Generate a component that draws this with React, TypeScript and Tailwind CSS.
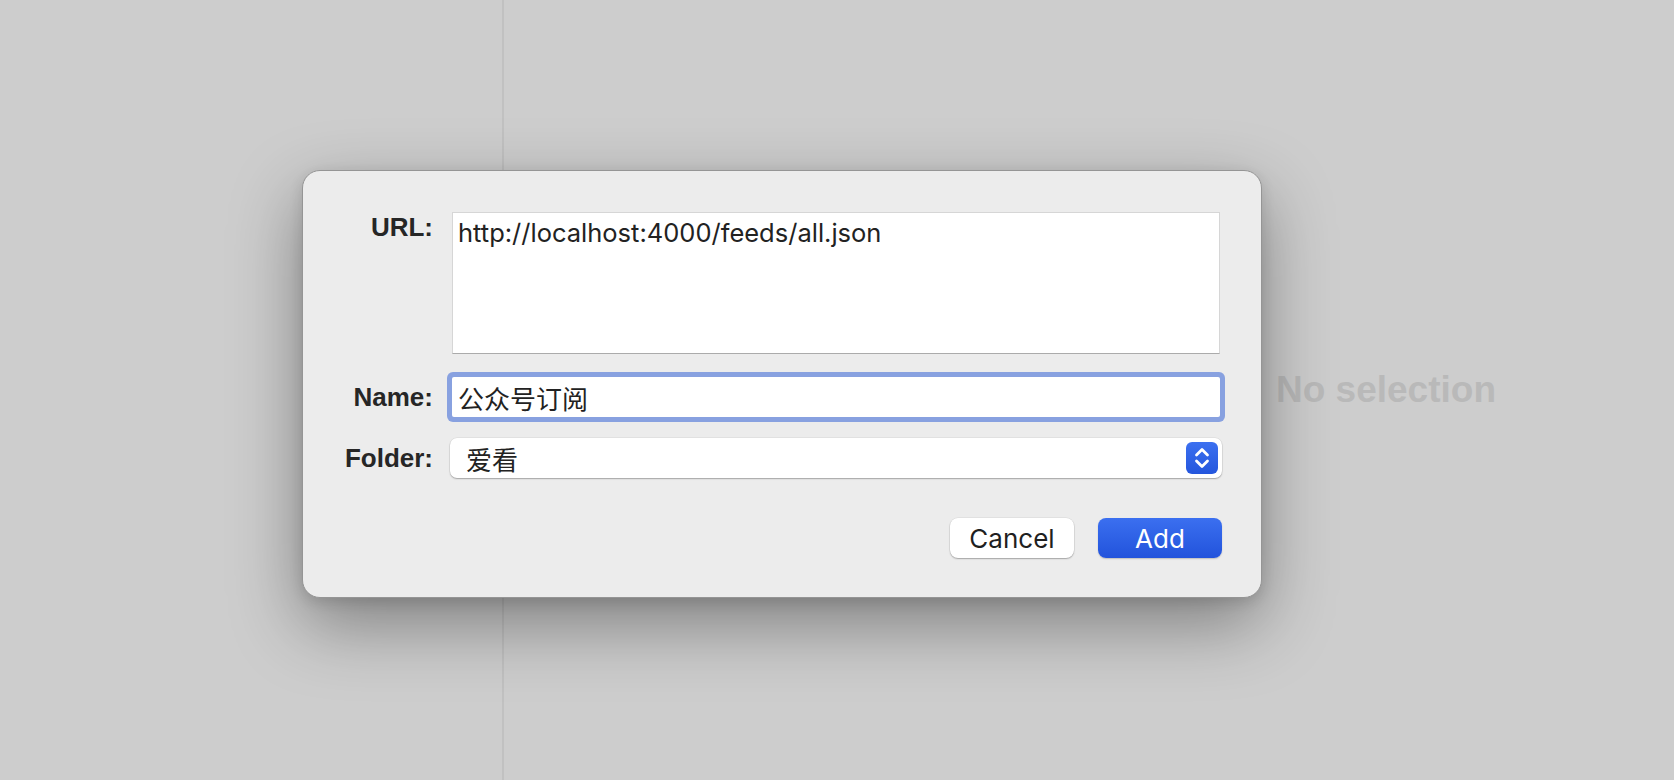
import React from "react";

const StepperIcon: React.FC = () => (
  <svg width="20" height="24" viewBox="0 0 20 24" fill="none" stroke="white" strokeWidth="2.8" strokeLinecap="round" strokeLinejoin="round">
    <path d="M4.5 9 L10 3.5 L15.5 9" />
    <path d="M4.5 15 L10 20.5 L15.5 15" />
  </svg>
);

const FieldLabel: React.FC<{ text: string }> = ({ text }) => (
  <div className="w-[130px] shrink-0 text-right text-[26px] leading-[30px] font-bold text-[#262626] font-['Liberation_Sans',sans-serif]">
    {text}
  </div>
);

const AddFeedSheet: React.FC = () => {
  return (
    <div className="absolute left-[302px] top-[170px] w-[960px] rounded-[18px] border border-[#959595] bg-[#ececec] shadow-[0_26px_70px_rgba(0,0,0,0.38),0_4px_14px_rgba(0,0,0,0.12)] pt-[41px] pb-[39px] pr-[39px]">
      {/* URL */}
      <div className="flex items-start">
        <FieldLabel text="URL:" />
        <div className="ml-[19px] h-[142px] w-[768px] border border-[#d6d6d6] border-b-[#ababab] bg-white px-[5px] pt-[4px] text-[25.5px] leading-[32px] text-[#222] font-['Inter',sans-serif]">
          http://localhost:4000/feeds/all.json
        </div>
      </div>

      {/* Name */}
      <div className="mt-[23px] flex items-center">
        <FieldLabel text="Name:" />
        <div className="ml-[19px] flex h-[40px] w-[768px] items-center rounded-[2px] bg-white pl-[6px] ring-[5px] ring-[#88a1e0] text-[26px] text-[#222] font-['Noto_Sans_CJK_SC',sans-serif]">
          公众号订阅
        </div>
      </div>

      {/* Folder */}
      <div className="mt-[21px] flex items-center">
        <FieldLabel text="Folder:" />
        <div className="ml-[17px] flex h-[40px] w-[772px] items-center justify-between rounded-[7px] bg-white pl-[16px] pr-[4px] shadow-[0_1px_1.5px_rgba(0,0,0,0.28),0_0_0_0.5px_rgba(0,0,0,0.08)]">
          <span className="text-[26px] text-[#222] font-['Noto_Sans_CJK_SC',sans-serif]">爱看</span>
          <div className="flex h-[32px] w-[32px] items-center justify-center rounded-[6px] bg-gradient-to-b from-[#3c70f0] to-[#2456dd]">
            <StepperIcon />
          </div>
        </div>
      </div>

      {/* Buttons */}
      <div className="mt-[40px] flex justify-end gap-[24px]">
        <button className="h-[40px] w-[124px] rounded-[8px] bg-white text-[26px] text-[#1f1f1f] shadow-[0_1px_1.5px_rgba(0,0,0,0.28),0_0_0_0.5px_rgba(0,0,0,0.08)] font-['Inter',sans-serif]">
          Cancel
        </button>
        <button className="h-[40px] w-[124px] rounded-[8px] bg-gradient-to-b from-[#3b6ff0] to-[#2253dc] text-[26px] text-white shadow-[0_1px_1.5px_rgba(0,0,0,0.2)] font-['Inter',sans-serif]">
          Add
        </button>
      </div>
    </div>
  );
};

export default function App() {
  return (
    <div className="relative flex h-[780px] w-[1674px] overflow-hidden bg-[#cdcdcd]">
      {/* sidebar */}
      <div className="w-[502px] shrink-0 bg-[#cdcdcd]" />
      <div className="w-[2px] shrink-0 bg-[#c1c1c1]" />
      {/* timeline */}
      <div className="w-[594px] shrink-0 bg-[#cdcdcd]" />
      {/* detail */}
      <div className="flex flex-1 items-center justify-center bg-[#cdcdcd]">
        <span className="text-[37px] font-bold text-[#b9b9b9] font-['Liberation_Sans',sans-serif]">No selection</span>
      </div>

      <AddFeedSheet />
    </div>
  );
}
